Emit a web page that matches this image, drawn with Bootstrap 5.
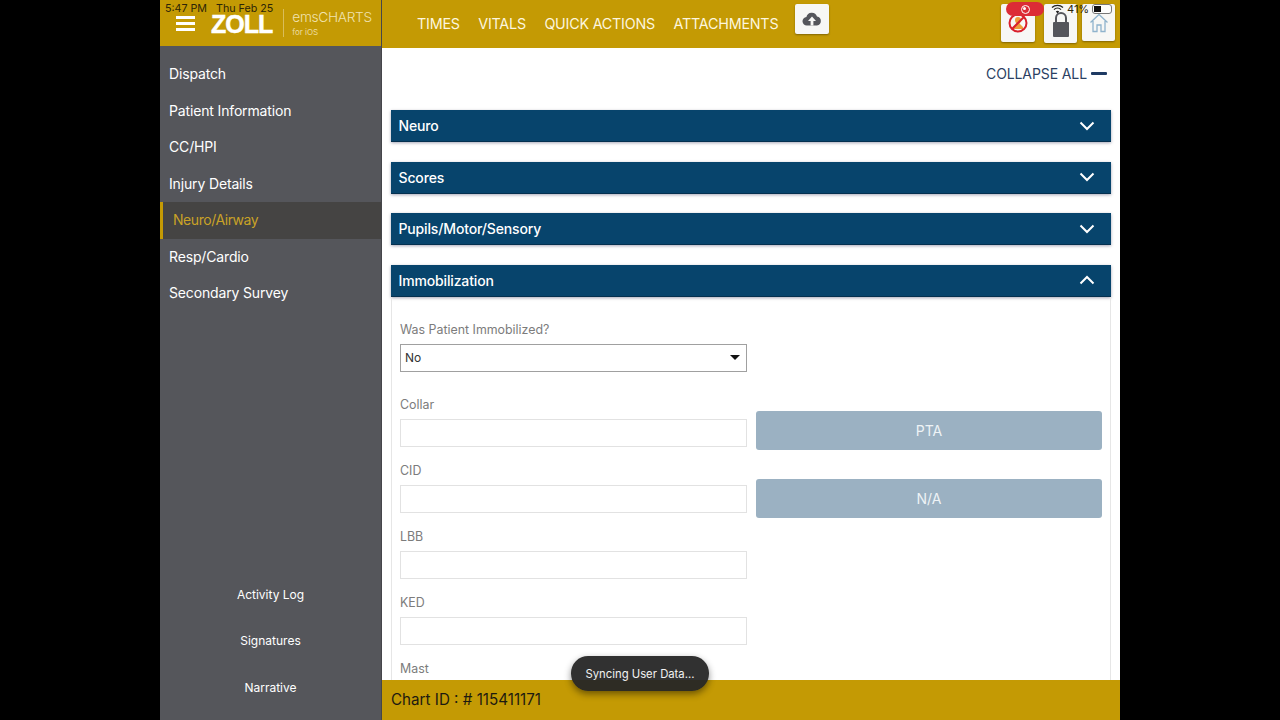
<!DOCTYPE html>
<html lang="en">
<head>
  <meta charset="UTF-8" />
  <meta name="viewport" content="width=device-width, initial-scale=1.0"/>
  <title>emsCHARTS</title>
  <link href="https://cdn.jsdelivr.net/npm/bootstrap@5.3.3/dist/css/bootstrap.min.css" rel="stylesheet">
  <style>
    html, body { height: 720px; overflow: hidden; background: #000; }
    body { font-family: Inter, "Liberation Sans", sans-serif; }
    .app-frame { width: 960px; height: 720px; margin: 0 auto; position: relative; overflow: hidden; background: #fff; }
    .side-col { width: 222px; background: #55565b; border-right: 1px solid #45464a; }
    .side-head { height: 46px; background: #c49a04; color: #fff; padding-left: 16px; flex: none; }
    .burger { width: 19px; flex: none; display: flex; flex-direction: column; gap: 3px; margin-right: 16px; }
    .burger span { height: 3px; background: #fff; display: block; }
    .zoll-word { font-family: "Liberation Sans", sans-serif; font-weight: 700; font-size: 25px; letter-spacing: -1px; line-height: 1; margin-top: 12px; -webkit-text-stroke: .5px #fff; }
    .logo-rule { width: 1px; height: 28px; background: #d9bd5a; margin: 9px 8px 0 11px; flex: none; }
    .ems-word { font-size: 13.7px; line-height: 1; color: #f1e3b0; font-weight: 300; letter-spacing: -.3px; margin-top: 11px; white-space: nowrap; }
    .ios-word { font-size: 8px; line-height: 1; color: #ecdca0; margin-top: 3px; }
    .side-menu { padding-top: 10px; }
    .side-link { height: 36.5px; line-height: 36.5px; padding-left: 9px; color: #fff; font-size: 14px; letter-spacing: -.15px; }
    .side-link.is-on { background: #454443; color: #c9a227; border-left: 3px solid #c49a04; padding-left: 10px; letter-spacing: -.45px; }
    .side-foot { padding-bottom: 9px; }
    .side-foot div { height: 46.3px; line-height: 46.3px; text-align: center; color: #fff; font-size: 12px; }
    .main-col { min-width: 0; }
    .top-strip { height: 48px; flex: none; background: #c49a04; color: #fff; font-size: 14.3px; padding-left: 35px; }
    .top-strip .top-link { margin-right: 18.5px; line-height: 47px; letter-spacing: -.2px; color: #fdf6df; }
    .tool-btn { background: #f7f7f5; border-radius: 2px; box-shadow: 0 1px 2px rgba(0,0,0,.35); display: flex; align-items: center; justify-content: center; }
    .cloud-btn { width: 34px; height: 30px; margin: 4px 0 0 -2px; }
    .tool-set { margin-left: auto; padding-right: 5px; gap: 9px; padding-top: 4px; }
    .tool-a { width: 34px; height: 38px; }
    .tool-b { width: 33px; height: 39px; }
    .tool-c { width: 33px; height: 37px; margin-left: -4px; }
    .main-body { padding: 0 9px 0 9px; overflow: hidden; min-height: 0; }
    .collapse-row { height: 62px; padding-right: 4px; color: #2b3f63; font-size: 14px; padding-bottom: 11px; letter-spacing: -.1px; }
    .collapse-dash { width: 16px; height: 3px; background: #1e3a63; margin-left: 4px; border-radius: 1px; }
    .acc-head { height: 32px; background: #07446c; color: #fff; font-size: 14px; font-weight: 500; padding: 0 16px 0 7.5px; border-bottom: 1px solid #04304f; box-shadow: 0 1px 3px rgba(0,0,50,.35); letter-spacing: -.15px; }
    .acc-gap { margin-bottom: 19.6px; }
    .acc-body { border: 1px solid #e6e6e6; border-top: 0; padding: 25px 8px 0 8px; height: 400px; gap: 9px; }
    .field-col { width: 347px; flex: none; }
    .btn-col { width: 346px; flex: none; padding-top: 89px; }
    .fld-label { color: #7c7c7c; font-size: 12.4px; line-height: 15px; margin-bottom: 7px; }
    .fld-box { height: 28px; border: 1px solid #e2e2e2; background: #fff; margin-bottom: 16px; }
    .fld-select { height: 28px; border: 1px solid #a0a0a0; color: #333; font-size: 12px; padding: 0 6px 0 4px; margin-bottom: 25px; }
    .caret-down { width: 0; height: 0; border-left: 5px solid transparent; border-right: 5px solid transparent; border-top: 5px solid #111; }
    .pale-btn { height: 39px; background: #9bb1c2; color: #eef3f6; font-size: 14px; border-radius: 3px; margin-bottom: 29px; display: flex; align-items: center; justify-content: center; }
    .chart-bar { height: 40px; background: #c49a04; color: #1d1a10; font-size: 15.2px; padding-left: 9px; }
    .status-left { position: absolute; left: 5px; top: 2px; font-size: 10.7px; line-height: 13px; color: #2c2508; }
    .rec-pill { position: absolute; left: 846px; top: 2px; width: 38px; height: 14px; background: #dc2c36; border-radius: 7px; display: flex; align-items: center; justify-content: center; }
    .rec-dot { width: 9px; height: 9px; border: 1.5px solid #fff; border-radius: 50%; position: relative; }
    .rec-dot::after { content: ""; position: absolute; left: 1.500px; top: 1.500px; width: 3px; height: 3px; background: #fff; border-radius: 50%; }
    .status-net { position: absolute; left: 891px; top: 2px; font-size: 11px; line-height: 14px; color: #2c2508; gap: 3px; }
    .batt-box { width: 20px; height: 10px; border: 1px solid #777; border-radius: 3px; padding: 1px; background: rgba(255,255,255,.7); display: block; }
    .batt-box span { display: block; width: 7px; height: 6px; background: #111; }
    .sync-toast { position: absolute; left: 411px; top: 656px; width: 138px; height: 35px; border-radius: 17px; background: rgba(38,38,38,.95); color: #f2f2f2; font-size: 11.3px; padding-top: 1px; display: flex; align-items: center; justify-content: center; box-shadow: 0 3px 7px rgba(0,0,0,.45); }
  </style>
</head>
<body>
  <div class="app-frame d-flex">
    <!-- Sidebar -->
    <div class="side-col d-flex flex-column flex-shrink-0">
      <div class="side-head d-flex align-items-center">
        <div class="burger"><span></span><span></span><span></span></div>
        <div class="zoll-word align-self-start">ZOLL</div>
        <div class="logo-rule align-self-start"></div>
        <div class="align-self-start">
          <div class="ems-word">emsCHARTS</div>
          <div class="ios-word">for iOS</div>
        </div>
      </div>
      <div class="side-menu">
        <div class="side-link">Dispatch</div>
        <div class="side-link">Patient Information</div>
        <div class="side-link">CC/HPI</div>
        <div class="side-link">Injury Details</div>
        <div class="side-link is-on">Neuro/Airway</div>
        <div class="side-link">Resp/Cardio</div>
        <div class="side-link">Secondary Survey</div>
      </div>
      <div class="side-foot mt-auto">
        <div>Activity Log</div>
        <div>Signatures</div>
        <div>Narrative</div>
      </div>
    </div>

    <!-- Main -->
    <div class="main-col flex-grow-1 d-flex flex-column">
      <div class="top-strip d-flex">
        <span class="top-link">TIMES</span>
        <span class="top-link">VITALS</span>
        <span class="top-link">QUICK ACTIONS</span>
        <span class="top-link">ATTACHMENTS</span>
        <div class="tool-btn cloud-btn">
          <svg width="20" height="14" viewBox="0 0 20 14"><path d="M5 13.5a4.2 4.2 0 0 1-.6-8.4A5.5 5.5 0 0 1 15 4.6a4.5 4.5 0 0 1 0 8.9Z" fill="#55565b"/><path d="M10 4.5 14 9h-2.6v4.5H8.6V9H6Z" fill="#f7f7f5"/></svg>
        </div>
        <div class="tool-set d-flex">
          <div class="tool-btn tool-a">
            <svg width="22" height="24" viewBox="0 0 22 24"><path d="M11 6a3 3 0 0 1 3 3c0 2-1 3-1.500 3.500L16 16v2H6v-2l3.500-3.500C9 12 8 11 8 9a3 3 0 0 1 3-3Z" fill="#ee9c3a"/><circle cx="11" cy="12" r="8.500" fill="none" stroke="#d9202c" stroke-width="2"/><path d="M5 18 17 6" stroke="#d9202c" stroke-width="2"/></svg>
          </div>
          <div class="tool-btn tool-b">
            <svg width="20" height="30" viewBox="0 0 20 30"><path d="M5 14V9a5 5 0 0 1 10 0v5" fill="none" stroke="#55565b" stroke-width="2"/><rect x="2" y="13" width="16" height="15" rx="1" fill="#55565b"/></svg>
          </div>
          <div class="tool-btn tool-c">
            <svg width="20" height="22" viewBox="0 0 20 22"><path d="M1.500 10.500 10 2.500l8.500 8M4 9v10.500h4V13h4v6.500h4V9" fill="none" stroke="#8fb3cc" stroke-width="1.300"/></svg>
          </div>
        </div>
      </div>

      <div class="main-body flex-grow-1">
        <div class="collapse-row d-flex align-items-center justify-content-end">COLLAPSE ALL <span class="collapse-dash"></span></div>

        <div class="acc-head acc-gap d-flex align-items-center justify-content-between">Neuro
          <svg width="16" height="10" viewBox="0 0 16 10"><path d="M1.500 1.500 8 8l6.500-6.500" fill="none" stroke="#fff" stroke-width="2"/></svg>
        </div>
        <div class="acc-head acc-gap d-flex align-items-center justify-content-between">Scores
          <svg width="16" height="10" viewBox="0 0 16 10"><path d="M1.500 1.500 8 8l6.500-6.500" fill="none" stroke="#fff" stroke-width="2"/></svg>
        </div>
        <div class="acc-head acc-gap d-flex align-items-center justify-content-between">Pupils/Motor/Sensory
          <svg width="16" height="10" viewBox="0 0 16 10"><path d="M1.500 1.500 8 8l6.500-6.500" fill="none" stroke="#fff" stroke-width="2"/></svg>
        </div>
        <div class="acc-head d-flex align-items-center justify-content-between">Immobilization
          <svg width="16" height="10" viewBox="0 0 16 10"><path d="M1.500 8.500 8 2l6.500 6.500" fill="none" stroke="#fff" stroke-width="2"/></svg>
        </div>
        <div class="acc-body d-flex">
          <div class="field-col">
            <div class="fld-label">Was Patient Immobilized?</div>
            <div class="fld-select d-flex align-items-center justify-content-between">No <span class="caret-down"></span></div>
            <div class="fld-label">Collar</div>
            <div class="fld-box"></div>
            <div class="fld-label">CID</div>
            <div class="fld-box"></div>
            <div class="fld-label">LBB</div>
            <div class="fld-box"></div>
            <div class="fld-label">KED</div>
            <div class="fld-box"></div>
            <div class="fld-label">Mast</div>
          </div>
          <div class="btn-col">
            <div class="pale-btn">PTA</div>
            <div class="pale-btn">N/A</div>
          </div>
        </div>
      </div>

      <div class="chart-bar d-flex align-items-center flex-shrink-0">Chart ID : # 115411171</div>
    </div>

    <!-- iOS overlays -->
    <div class="status-left">5:47 PM &nbsp;&nbsp;Thu Feb 25</div>
    <div class="rec-pill"><span class="rec-dot"></span></div>
    <div class="status-net d-flex align-items-center">
      <svg width="13" height="10" viewBox="0 0 13 10"><path d="M1 3.500a8 8 0 0 1 11 0M3 5.600a5 5 0 0 1 7 0" fill="none" stroke="#222" stroke-width="1.300"/><path d="M6.500 9.500 4.800 7.500a2.500 2.500 0 0 1 3.400 0Z" fill="#222"/></svg>
      <span>41%</span>
      <span class="batt-box"><span></span></span>
    </div>
    <div class="sync-toast">Syncing User Data...</div>
  </div>
  <script src="https://cdn.jsdelivr.net/npm/bootstrap@5.3.3/dist/js/bootstrap.bundle.min.js"></script>
</body>
</html>
